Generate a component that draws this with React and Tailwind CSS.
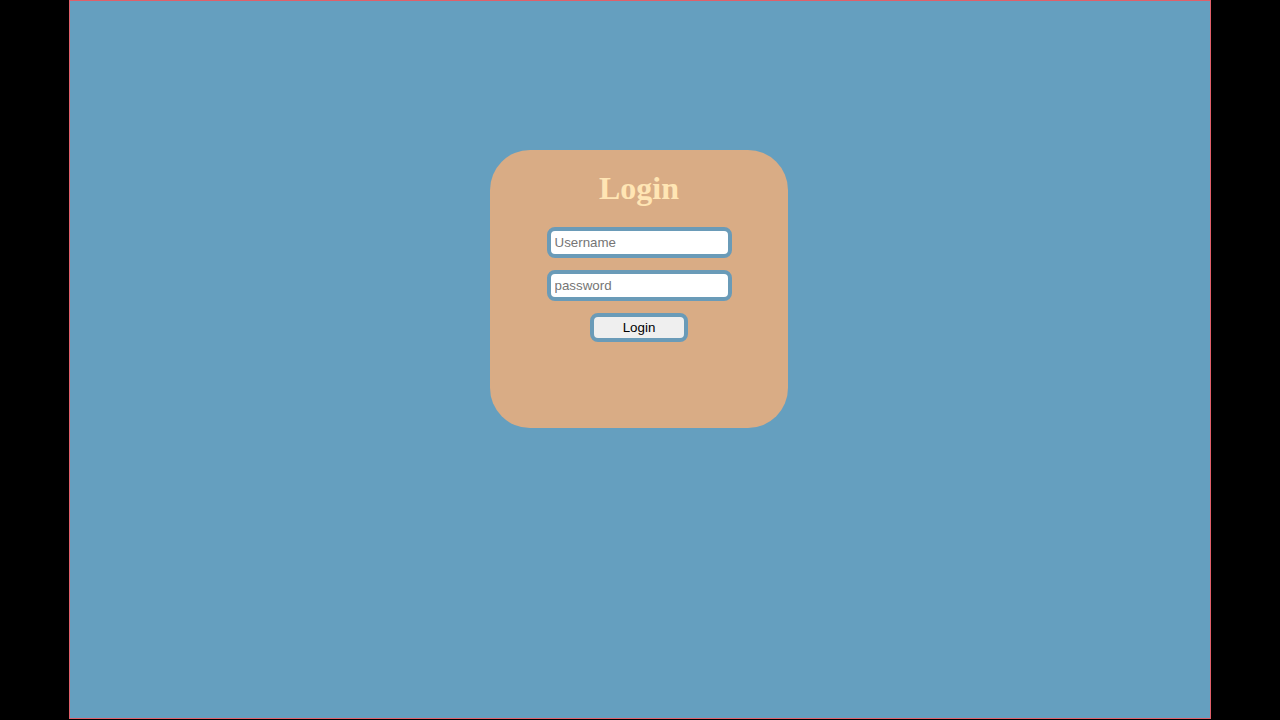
import React from 'react';

const App = () => {
    return (
        <div className="w-[1280px] h-[720px] bg-black flex justify-center">
            <div className="w-[1142px] h-[719px] bg-[#659fbf] border border-[#e0606a] flex justify-center">
                <div className="mt-[149px] mr-[2px] w-[298px] h-[278px] bg-[#d9ac85] rounded-[40px] flex flex-col items-center pt-[20px]">
                    <h1 className="text-[32px] leading-[36px] font-bold text-[#ffe5b4] font-['Liberation_Serif',serif]">
                        Login
                    </h1>
                    <input
                        type="text"
                        placeholder="Username"
                        className="mt-[21px] w-[185px] h-[31px] bg-white border-4 border-[#6a9bb8] rounded-[8px] px-[4px] text-[13.33px] text-black placeholder:text-[#757575] font-['Liberation_Sans',sans-serif] outline-none"
                    />
                    <input
                        type="password"
                        placeholder="password"
                        className="mt-[12px] w-[185px] h-[31px] bg-white border-4 border-[#6a9bb8] rounded-[8px] px-[4px] text-[13.33px] text-black placeholder:text-[#757575] font-['Liberation_Sans',sans-serif] outline-none"
                    />
                    <button className="mt-[12px] w-[98px] h-[29px] bg-[#efefef] border-4 border-[#6a9bb8] rounded-[8px] text-[13.33px] text-black font-['Liberation_Sans',sans-serif]">
                        Login
                    </button>
                </div>
            </div>
        </div>
    );
};

export default App;
